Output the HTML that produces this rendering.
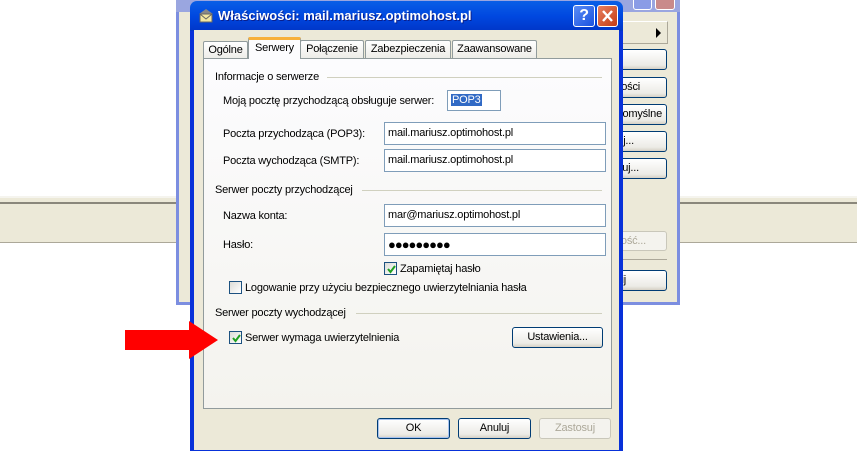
<!DOCTYPE html>
<html><head><meta charset="utf-8"><style>
*{margin:0;padding:0;box-sizing:border-box}
body{width:857px;height:447px;background:#fff;position:relative;overflow:hidden;font-family:"Liberation Sans",sans-serif;font-size:11px;letter-spacing:-0.2px;color:#000}
.a{position:absolute}
.btn{position:absolute;border:1px solid #003c74;border-radius:3px;background:linear-gradient(#fff,#ecebe6 80%,#d6d0c5);text-align:center;line-height:18px;font-size:11px}
.inp{position:absolute;border:1px solid #7f9db9;background:#fff;padding:4px 0 0 3px;height:23px}
.cb{position:absolute;width:13px;height:13px;border:1px solid #1c5180;background:linear-gradient(135deg,#dcdcd7,#fff)}
.cb svg{position:absolute;left:1px;top:1px}
.sec{position:absolute;left:215px;color:#000}
.line{position:absolute;height:1px;background:#d0d0bf}
.tab{position:absolute;top:40px;height:19px;border:1px solid #919b9c;border-bottom:none;background:linear-gradient(#fff,#ecebe6);text-align:center;line-height:17px;border-radius:2px 2px 0 0}
</style></head><body>
<div class="a" style="left:0;top:196px;width:857px;height:47px;background:#ece9d8;border-top:2px solid #f5f4ee;border-bottom:1px solid #aca899"></div>
<div class="a" style="left:0;top:202px;width:857px;height:2px;background:#8a877b"></div>
<div class="a" style="left:176px;top:-10px;width:504px;height:315px;background:#ece9d8;border:3px solid #7c8ee0;border-top:none"></div>
<div class="a" style="left:176px;top:0;width:504px;height:12px;background:#9aa6e0"></div>
<div class="a" style="left:633px;top:-6px;width:19px;height:16px;background:#8a9ce6;border:1px solid #fff;border-radius:3px"></div>
<div class="a" style="left:655px;top:-6px;width:20px;height:16px;background:#c98a8a;border:1px solid #fff;border-radius:3px"></div>
<div class="a" style="left:600px;top:21px;width:68px;height:23px;background:#ece9d8;border:1px solid #aca899;border-top-color:#fff;border-left-color:#fff"></div>
<div class="a" style="left:656px;top:28px;width:0;height:0;border-top:5px solid transparent;border-bottom:5px solid transparent;border-left:5px solid #000"></div>
<div class="btn" style="left:600px;top:49px;width:67px;height:21px"></div>
<div class="btn" style="left:600px;top:77px;width:67px;height:21px;text-align:right;padding-right:26px">ości</div>
<div class="btn" style="left:600px;top:104px;width:67px;height:21px;text-align:right;padding-right:4px">omyślne</div>
<div class="btn" style="left:600px;top:131px;width:67px;height:21px;text-align:right;padding-right:32px">j...</div>
<div class="btn" style="left:600px;top:158px;width:67px;height:21px;text-align:right;padding-right:27px">uj...</div>
<div class="btn" style="left:600px;top:231px;width:67px;height:20px;border-color:#c9c7ba;color:#aca899;background:#f4f3ee;text-align:right;padding-right:20px">ność...</div>
<div class="a" style="left:620px;top:259px;width:47px;height:1px;background:#aca899"></div>
<div class="btn" style="left:600px;top:270px;width:67px;height:21px;text-align:right;padding-right:40px">nij</div>
<div class="a" style="left:190px;top:1px;width:433px;height:450px;border-radius:7px 7px 0 0;background:linear-gradient(#0a5fe6,#0048e0 15px,#0036c8 30px,#0831d9 30px)"></div>
<div class="a" style="left:194px;top:30px;width:425px;height:420px;background:#ece9d8"></div>
<div class="a" style="left:197px;top:7px;width:18px;height:16px"><svg width="18" height="16"><path d="M2 7 L9 2 L16 7 Z" fill="#888"/><rect x="3" y="7" width="12" height="8" fill="#f3e7a0" stroke="#666"/><path d="M3 7 L9 12 L15 7" stroke="#666" fill="none"/></svg></div>
<div class="a" style="left:218px;top:8px;color:#fff;font-weight:bold;font-size:13px;letter-spacing:0;text-shadow:1px 1px #0a1e8a">Właściwości: mail.mariusz.optimohost.pl</div>
<div class="a" style="left:573px;top:5px;width:22px;height:22px;border:1px solid #fff;border-radius:3px;background:linear-gradient(135deg,#5a8cf5,#1a52e0);color:#fff;font-weight:bold;font-size:16px;text-align:center;line-height:20px">?</div>
<div class="a" style="left:597px;top:5px;width:21px;height:22px;border:1px solid #fff;border-radius:3px;background:linear-gradient(135deg,#e88060,#c43c14)"><svg width="19" height="20"><path d="M5 5 L14 15 M14 5 L5 15" stroke="#fff" stroke-width="2.4"/></svg></div>
<div class="tab" style="left:203px;width:45px;top:41px">Ogólne</div>
<div class="tab" style="left:300px;width:64px">Połączenie</div>
<div class="tab" style="left:365px;width:86px">Zabezpieczenia</div>
<div class="tab" style="left:452px;width:85px">Zaawansowane</div>
<div class="a" style="left:203px;top:58px;width:409px;height:351px;border:1px solid #919b9c;background:linear-gradient(#fcfcfe,#f4f3ee)"></div>
<div class="tab" style="left:248px;width:53px;top:37px;height:22px;border-top:3px solid #f7b03b;background:#fcfcfe;line-height:16px">Serwery</div>
<div class="sec" style="top:71px">Informacje o serwerze</div><div class="line" style="left:327px;top:77px;width:275px"></div>
<div class="a" style="left:223px;top:95px">Moją pocztę przychodzącą obsługuje serwer:</div>
<div class="a" style="left:447px;top:90px;width:54px;height:21px;border:1px solid #7f9db9;background:#fff"><span style="position:absolute;left:3px;top:3px;background:#316ac5;color:#fff;padding:0 1px">POP3</span></div>
<div class="a" style="left:223px;top:128px">Poczta przychodząca (POP3):</div>
<div class="inp" style="left:384px;top:122px;width:222px">mail.mariusz.optimohost.pl</div>
<div class="a" style="left:223px;top:155px">Poczta wychodząca (SMTP):</div>
<div class="inp" style="left:384px;top:149px;width:222px">mail.mariusz.optimohost.pl</div>
<div class="sec" style="top:184px">Serwer poczty przychodzącej</div><div class="line" style="left:362px;top:190px;width:240px"></div>
<div class="a" style="left:223px;top:210px">Nazwa konta:</div>
<div class="inp" style="left:384px;top:204px;width:222px">mar@mariusz.optimohost.pl</div>
<div class="a" style="left:223px;top:239px">Hasło:</div>
<div class="inp" style="left:384px;top:233px;width:222px;font-size:13px;letter-spacing:-1px;padding-top:3px">●●●●●●●●●</div>
<div class="cb" style="left:384px;top:262px"><svg width="11" height="11"><path d="M2 5 L4.5 8 L9 2" stroke="#21a121" stroke-width="2" fill="none"/></svg></div>
<div class="a" style="left:400px;top:263px">Zapamiętaj hasło</div>
<div class="cb" style="left:229px;top:281px"></div>
<div class="a" style="left:245px;top:282px">Logowanie przy użyciu bezpiecznego uwierzytelniania hasła</div>
<div class="sec" style="top:307px">Serwer poczty wychodzącej</div><div class="line" style="left:356px;top:313px;width:246px"></div>
<div class="cb" style="left:229px;top:331px"><svg width="11" height="11"><path d="M2 5 L4.5 8 L9 2" stroke="#21a121" stroke-width="2" fill="none"/></svg></div>
<div class="a" style="left:245px;top:332px">Serwer wymaga uwierzytelnienia</div>
<div class="btn" style="left:512px;top:327px;width:91px;height:21px">Ustawienia...</div>
<div class="btn" style="left:377px;top:418px;width:73px;height:21px;box-shadow:inset 0 0 0 1px #a6c3f0">OK</div>
<div class="btn" style="left:458px;top:418px;width:73px;height:21px">Anuluj</div>
<div class="btn" style="left:539px;top:418px;width:72px;height:21px;border-color:#c9c7ba;color:#aca899;background:#f4f3ee">Zastosuj</div>
<svg class="a" style="left:124px;top:320px" width="96" height="40"><path d="M1 10 H65 V1 L94 20 L65 39 V30 H1 Z" fill="#f00"/></svg>
</body></html>
